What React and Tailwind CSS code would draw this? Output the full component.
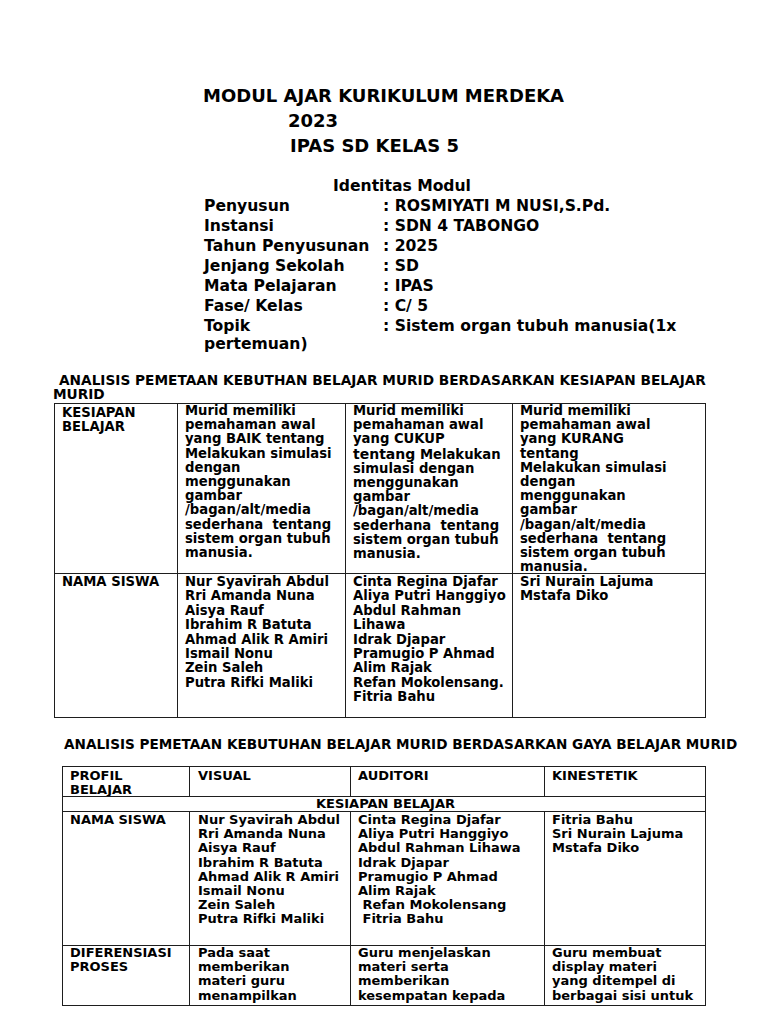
const identitas = [
  ["Penyusun", "ROSMIYATI M NUSI,S.Pd."],
  ["Instansi", "SDN 4 TABONGO"],
  ["Tahun Penyusunan", "2025"],
  ["Jenjang Sekolah", "SD"],
  ["Mata Pelajaran", "IPAS"],
  ["Fase/ Kelas", "C/ 5"],
];

const namaVisual = [
  "Nur Syavirah Abdul",
  "Rri Amanda Nuna",
  "Aisya Rauf",
  "Ibrahim R Batuta",
  "Ahmad Alik R Amiri",
  "Ismail Nonu",
  "Zein Saleh",
  "Putra Rifki Maliki",
];

const kesiapan = [
  [
    "Murid memiliki",
    "pemahaman awal",
    "yang BAIK tentang",
    "Melakukan simulasi",
    "dengan",
    "menggunakan",
    "gambar",
    "/bagan/alt/media",
    "sederhana  tentang",
    "sistem organ tubuh",
    "manusia.",
  ],
  [
    "Murid memiliki",
    "pemahaman awal",
    "yang CUKUP",
    "__tentang",
    "simulasi dengan",
    "menggunakan",
    "gambar",
    "/bagan/alt/media",
    "sederhana  tentang",
    "sistem organ tubuh",
    "manusia.",
  ],
  [
    "Murid memiliki",
    "pemahaman awal",
    "yang KURANG",
    "tentang",
    "Melakukan simulasi",
    "dengan",
    "menggunakan",
    "gambar",
    "/bagan/alt/media",
    "sederhana  tentang",
    "sistem organ tubuh",
    "manusia.",
  ],
];

function Lines({ items }) {
  return items.map((t, i) =>
    t === "__tentang" ? (
      <div key={i} className="whitespace-pre">
        <span className="text-[14px]">tentang</span> Melakukan
      </div>
    ) : (
      <div key={i} className="whitespace-pre">
        {t}
      </div>
    )
  );
}

const cell = "border-r border-b border-[#1e1e1e] pl-[7px] pr-1 overflow-hidden";

export default function App() {
  return (
    <div className="w-[768px] h-[1024px] overflow-hidden bg-white text-black font-bold font-['DejaVu_Sans',sans-serif]">
      <div className="pt-[83px] text-[18px] leading-[25px]">
        <div className="ml-[203px]">MODUL AJAR KURIKULUM MERDEKA</div>
        <div className="ml-[288px]">2023</div>
        <div className="ml-[290px]">IPAS SD KELAS 5</div>
      </div>

      <div className="mt-[18px] text-[15.6px] leading-[20px]">
        <div className="ml-[333px]">Identitas Modul</div>
        {identitas.map(([k, v]) => (
          <div key={k} className="flex ml-[204px]">
            <span className="w-[179px] shrink-0">{k}</span>
            <span>: {v}</span>
          </div>
        ))}
        <div className="mt-[1px] ml-[204px] leading-[18px]">
          <div className="flex">
            <span className="w-[179px] shrink-0">Topik</span>
            <span>: Sistem organ tubuh manusia(1x</span>
          </div>
          <div>pertemuan)</div>
        </div>
      </div>

      <div className="mt-[20px] ml-[53px] text-[13.7px] leading-[14px] whitespace-nowrap">
        <div className="pl-[6px]">ANALISIS PEMETAAN KEBUTHAN BELAJAR MURID BERDASARKAN KESIAPAN BELAJAR</div>
        <div>MURID</div>
      </div>

      <div className="mt-[2px] ml-[54px] w-[652px] grid grid-cols-[123px_168px_167px_193px] grid-rows-[170px_144px] border-t border-l border-[#1e1e1e] text-[13.2px] leading-[14.2px]">
        <div className={`${cell} pt-[2px]`}>
          <div>KESIAPAN</div>
          <div>BELAJAR</div>
        </div>
        {kesiapan.map((col, i) => (
          <div key={i} className={cell}>
            <Lines items={col} />
          </div>
        ))}
        <div className={`${cell} pt-[1px]`}>NAMA SISWA</div>
        <div className={`${cell} pt-[1px] leading-[14.4px]`}>
          <Lines items={namaVisual} />
        </div>
        <div className={`${cell} pt-[1px] leading-[14.4px]`}>
          <Lines
            items={[
              "Cinta Regina Djafar",
              "Aliya Putri Hanggiyo",
              "Abdul Rahman",
              "Lihawa",
              "Idrak Djapar",
              "Pramugio P Ahmad",
              "Alim Rajak",
              "Refan Mokolensang.",
              "Fitria Bahu",
            ]}
          />
        </div>
        <div className={`${cell} pt-[1px] leading-[14.4px]`}>
          <Lines items={["Sri Nurain Lajuma", "Mstafa Diko"]} />
        </div>
      </div>

      <div className="mt-[19px] ml-[64px] text-[13.6px] leading-[14px] whitespace-nowrap">
        ANALISIS PEMETAAN KEBUTUHAN BELAJAR MURID BERDASARKAN GAYA BELAJAR MURID
      </div>

      <div className="mt-[15px] ml-[62px] w-[644px] grid grid-cols-[127px_161px_194px_161px] grid-rows-[30px_15px_134px_60px] border-t border-l border-[#1e1e1e] text-[13px] leading-[14.2px]">
        <div className={`${cell} pt-[2px]`}>
          <div>PROFIL</div>
          <div>BELAJAR</div>
        </div>
        <div className={`${cell} pt-[2px] pl-[8px]`}>VISUAL</div>
        <div className={`${cell} pt-[2px]`}>AUDITORI</div>
        <div className={`${cell} pt-[2px]`}>KINESTETIK</div>
        <div className={`${cell} col-span-4 text-center leading-[14px] pl-0`}>KESIAPAN BELAJAR</div>
        <div className={`${cell} pt-[1px]`}>NAMA SISWA</div>
        <div className={`${cell} pt-[1px] pl-[8px]`}>
          <Lines items={namaVisual} />
        </div>
        <div className={`${cell} pt-[1px]`}>
          <Lines
            items={[
              "Cinta Regina Djafar",
              "Aliya Putri Hanggiyo",
              "Abdul Rahman Lihawa",
              "Idrak Djapar",
              "Pramugio P Ahmad",
              "Alim Rajak",
              " Refan Mokolensang",
              " Fitria Bahu",
            ]}
          />
        </div>
        <div className={`${cell} pt-[1px]`}>
          <Lines items={["Fitria Bahu", "Sri Nurain Lajuma", "Mstafa Diko"]} />
        </div>
        <div className={`${cell} pt-0`}>
          <Lines items={["DIFERENSIASI", "PROSES"]} />
        </div>
        <div className={`${cell} pt-0 pl-[8px]`}>
          <Lines items={["Pada saat", "memberikan", "materi guru", "menampilkan"]} />
        </div>
        <div className={`${cell} pt-0`}>
          <Lines items={["Guru menjelaskan", "materi serta", "memberikan", "kesempatan kepada"]} />
        </div>
        <div className={`${cell} pt-0`}>
          <Lines items={["Guru membuat", "display materi", "yang ditempel di", "berbagai sisi untuk"]} />
        </div>
      </div>
    </div>
  );
}
